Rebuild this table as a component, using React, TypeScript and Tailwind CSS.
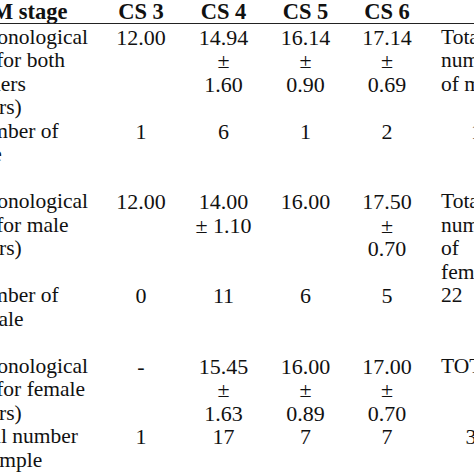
type Line = { t: string; shift?: string };
type Cell = { lines: (string | Line)[]; align?: "left" | "center" };
type Row = { h: string; cells: Cell[] };

const head = ["CS 3", "CS 4", "CS 5", "CS 6"];

// first cell = label column (cut off at the left edge), last cell = side column
const rows: Row[] = [
  {
    h: "h-[94px]",
    cells: [
      {
        lines: [
          "Chronological",
          { t: "age for both", shift: "ml-[-4px]" },
          { t: "genders", shift: "ml-[-6px]" },
          { t: "(years)", shift: "ml-[-3px]" },
        ],
      },
      { lines: ["12.00"] },
      { lines: ["14.94", "±", "1.60"] },
      { lines: ["16.14", "±", "0.90"] },
      { lines: ["17.14", "±", "0.69"] },
      { lines: ["Total", "number", "of male"] },
    ],
  },
  {
    h: "h-[70.5px]",
    cells: [
      { lines: ["Number of", { t: "male", shift: "ml-[-5px]" }] },
      { lines: ["1"] },
      { lines: ["6"] },
      { lines: ["1"] },
      { lines: ["2"] },
      { lines: ["1"], align: "center" },
    ],
  },
  {
    h: "h-[94px]",
    cells: [
      {
        lines: [
          "Chronological",
          { t: "age for male", shift: "ml-[-4px]" },
          { t: "(years)", shift: "ml-[-3px]" },
        ],
      },
      { lines: ["12.00"] },
      { lines: ["14.00", "± 1.10"] },
      { lines: ["16.00"] },
      { lines: ["17.50", "±", "0.70"] },
      { lines: ["Total", "number", "of", "female"] },
    ],
  },
  {
    h: "h-[70.5px]",
    cells: [
      { lines: ["Number of", "female"] },
      { lines: ["0"] },
      { lines: ["11"] },
      { lines: ["6"] },
      { lines: ["5"] },
      { lines: ["22"] },
    ],
  },
  {
    h: "h-[70.5px]",
    cells: [
      {
        lines: [
          "Chronological",
          { t: "age for female", shift: "ml-[-4px]" },
          { t: "(years)", shift: "ml-[-3px]" },
        ],
      },
      { lines: ["-"] },
      { lines: ["15.45", "±", "1.63"] },
      { lines: ["16.00", "±", "0.89"] },
      { lines: ["17.00", "±", "0.70"] },
      { lines: ["TOTAL"] },
    ],
  },
  {
    h: "h-[60px]",
    cells: [
      {
        lines: [
          { t: "Total number", shift: "ml-[-2px]" },
          { t: "of sample", shift: "ml-[-7px]" },
        ],
      },
      { lines: ["1"] },
      { lines: ["17"] },
      { lines: ["7"] },
      { lines: ["7"] },
      { lines: ["32"], align: "center" },
    ],
  },
];

const grid = "grid grid-cols-[135px_82px_83px_81px_82px_77px] w-[540px] ml-[-35px]";

function Lines({ lines }: { lines: (string | Line)[] }) {
  return (
    <>
      {lines.map((l, i) => {
        const line = typeof l === "string" ? { t: l } : l;
        return (
          <div key={i} className={`whitespace-nowrap ${line.shift ?? ""}`}>
            {line.t}
          </div>
        );
      })}
    </>
  );
}

export default function App() {
  return (
    <div className="w-[474px] h-[474px] overflow-hidden bg-white text-[#111] font-['Liberation_Serif',serif] text-[21.5px] leading-[23.5px]">
      <div className="h-[24px] border-b-[1.5px] border-[#222] w-full overflow-hidden">
        <div className={`${grid} font-bold text-[22.5px]`}>
          <div className="pl-[27px] whitespace-nowrap">M stage</div>
          {head.map((h) => (
            <div key={h} className="text-center whitespace-nowrap">{h}</div>
          ))}
          <div />
        </div>
      </div>

      <div className="mt-[1.5px]">
        {rows.map((row, ri) => (
          <div key={ri} className={`${grid} ${row.h}`}>
            {row.cells.map((c, ci) => {
              if (ci === 0) {
                return (
                  <div key={ci} className="text-left">
                    <Lines lines={c.lines} />
                  </div>
                );
              }
              if (ci === 5) {
                return (
                  <div
                    key={ci}
                    className={
                      c.align === "center"
                        ? "pl-[20px] text-center text-[22px]"
                        : "pl-[13px] text-left"
                    }
                  >
                    <Lines lines={c.lines} />
                  </div>
                );
              }
              return (
                <div key={ci} className="text-center text-[22px]">
                  <Lines lines={c.lines} />
                </div>
              );
            })}
          </div>
        ))}
      </div>
    </div>
  );
}
